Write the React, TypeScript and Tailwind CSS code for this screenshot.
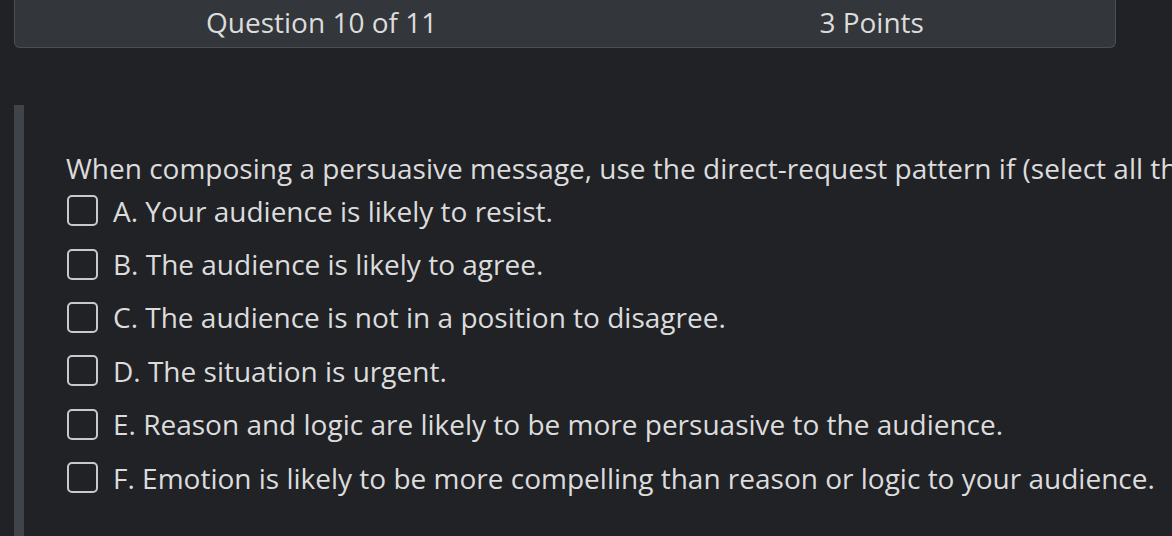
import React from 'react';

const options = [
  'A. Your audience is likely to resist.',
  'B. The audience is likely to agree.',
  'C. The audience is not in a position to disagree.',
  'D. The situation is urgent.',
  'E. Reason and logic are likely to be more persuasive to the audience.',
  'F. Emotion is likely to be more compelling than reason or logic to your audience.',
];

export default function App() {
  return (
    <div
      className="w-[1172px] h-[536px] bg-[#212226] overflow-hidden text-[#dcdcdc]"
      style={{ fontFamily: '"Open Sans", "Noto Sans", sans-serif' }}
    >
      {/* Question header */}
      <div className="ml-[14px] w-[1102px] h-[49px] -mt-px bg-[#33363b] border border-t-0 border-[#4a4e55] rounded-b-[6px] flex items-center justify-around text-[28px] leading-none pb-[2px]">
        <span>Question 10 of 11</span>
        <span>3 Points</span>
      </div>

      {/* Question body */}
      <div className="mt-[57px] ml-[14px] border-l-[10px] border-[#3f444b] h-[500px] pl-[42px] pt-[45px] overflow-hidden">
        <div className="text-[28px] leading-[36px] whitespace-nowrap">
          When composing a persuasive message, use the direct-request pattern if (select all that apply):
        </div>
        <div className="flex flex-col -mt-[2px]">
          {options.map((o) => (
            <label key={o} className="flex items-center h-[53.4px] gap-[15px]">
              <span className="w-[31px] h-[31px] shrink-0 rounded-[5px] border-2 border-[#c9c9c9] ml-px" />
              <span className="text-[28px] leading-none whitespace-nowrap">{o}</span>
            </label>
          ))}
        </div>
      </div>
    </div>
  );
}
